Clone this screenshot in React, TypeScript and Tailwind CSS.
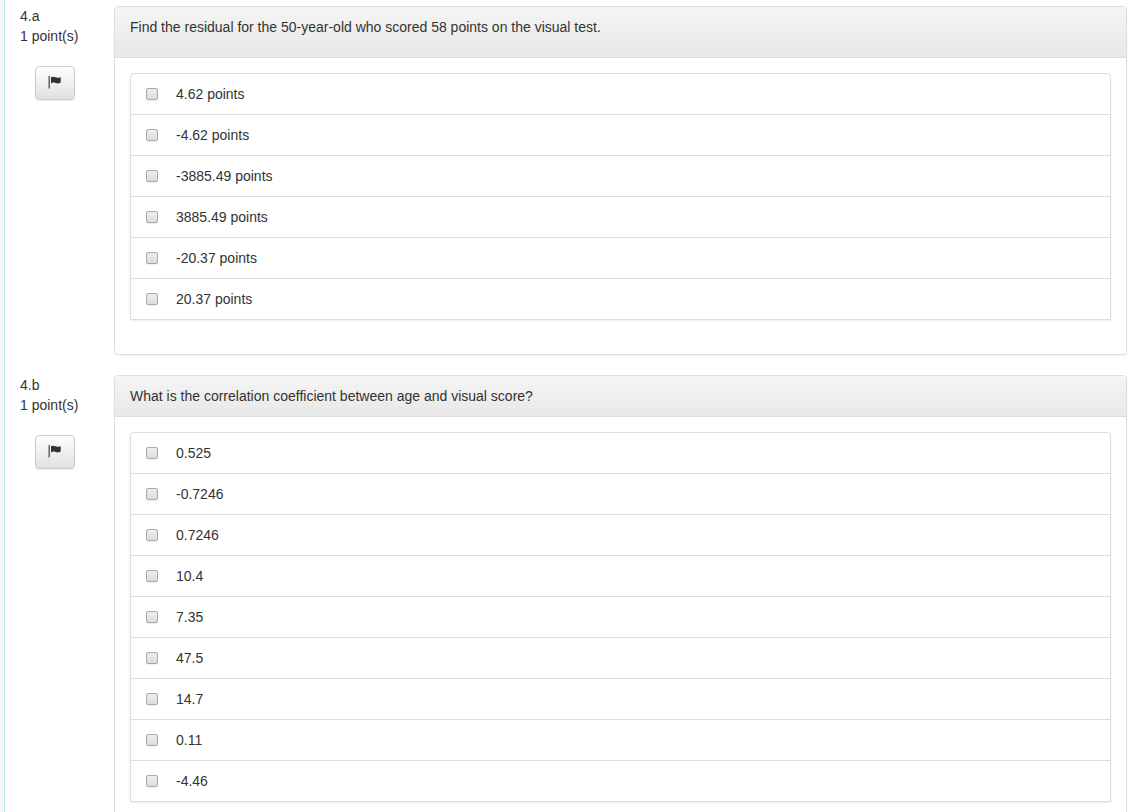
type Question = {
  id: string
  points: number
  prompt: string
  extraSpace?: boolean
  options: string[]
}

const questions: Question[] = [
  {
    id: "4.a",
    points: 1,
    prompt: "Find the residual for the 50-year-old who scored 58 points on the visual test.",
    extraSpace: true,
    options: [
      "4.62 points",
      "-4.62 points",
      "-3885.49 points",
      "3885.49 points",
      "-20.37 points",
      "20.37 points",
    ],
  },
  {
    id: "4.b",
    points: 1,
    prompt: "What is the correlation coefficient between age and visual score?",
    options: ["0.525", "-0.7246", "0.7246", "10.4", "7.35", "47.5", "14.7", "0.11", "-4.46"],
  },
]

function FlagIcon() {
  return (
    <svg width="14" height="14" viewBox="0 0 14 14" aria-hidden="true">
      <path d="M.6 0h1.100v12.500H.6z" fill="#333" />
      <path d="M3 1.300c1.500-.9 3-.7 4.500 0s3.200.7 5.200-.4v5.700c-2 1.100-3.700 1.100-5.200.4s-3-.6-4.500.4z" fill="#333" />
    </svg>
  )
}

function QuestionBlock({ question }: { question: Question }) {
  return (
    <section className="flex items-start">
      {/* Number, points and flag button */}
      <div className="w-[109px] shrink-0 pl-[15px]">
        <p>{question.id}</p>
        <p>{question.points} point(s)</p>
        <button
          type="button"
          aria-label={`Flag question ${question.id}`}
          className="mt-5 ml-[15px] flex h-[34px] w-10 items-center justify-center rounded border border-[#ccc] bg-linear-to-b from-white to-[#e0e0e0] shadow-[0_1px_1px_rgba(0,0,0,0.075)]"
        >
          <FlagIcon />
        </button>
      </div>

      {/* Question panel */}
      <div className="min-w-0 flex-1 rounded border border-[#ddd] bg-white shadow-[0_1px_2px_rgba(0,0,0,0.05)]">
        <div
          className={`rounded-t-[3px] border-b border-[#ddd] bg-linear-to-b from-[#f5f5f5] to-[#e8e8e8] px-[15px] pt-2.5 ${
            question.extraSpace ? "pb-5" : "pb-2.5"
          }`}
        >
          <p>{question.prompt}</p>
        </div>
        <div className="px-[15px] pt-[15px] pb-[34px]">
          <ul className="divide-y divide-[#ddd] rounded-t border border-[#ddd] shadow-[0_1px_2px_rgba(0,0,0,0.075)]">
            {question.options.map((option) => (
              <li key={option}>
                <label className="flex items-center px-[15px] py-2.5">
                  <input
                    type="checkbox"
                    name={question.id}
                    value={option}
                    className="mr-[18px] size-3 shrink-0 appearance-none rounded-xs border border-[#aaa] bg-linear-to-b from-[#eee] to-[#dcdcdc] shadow-[0_1px_1px_rgba(0,0,0,0.06)] checked:from-[#888] checked:to-[#666]"
                  />
                  <span>{option}</span>
                </label>
              </li>
            ))}
          </ul>
        </div>
      </div>
    </section>
  )
}

export default function App() {
  return (
    <div className="min-h-screen bg-[#f5f5f5] pl-1 font-['Liberation_Sans',Arial,sans-serif] text-sm leading-5 text-[#333]">
      <main className="flex min-h-screen flex-col gap-5 border-l border-[#bce8f1] bg-white pt-1.5 pr-1.5 pb-5">
        {questions.map((question) => (
          <QuestionBlock key={question.id} question={question} />
        ))}
      </main>
    </div>
  )
}
